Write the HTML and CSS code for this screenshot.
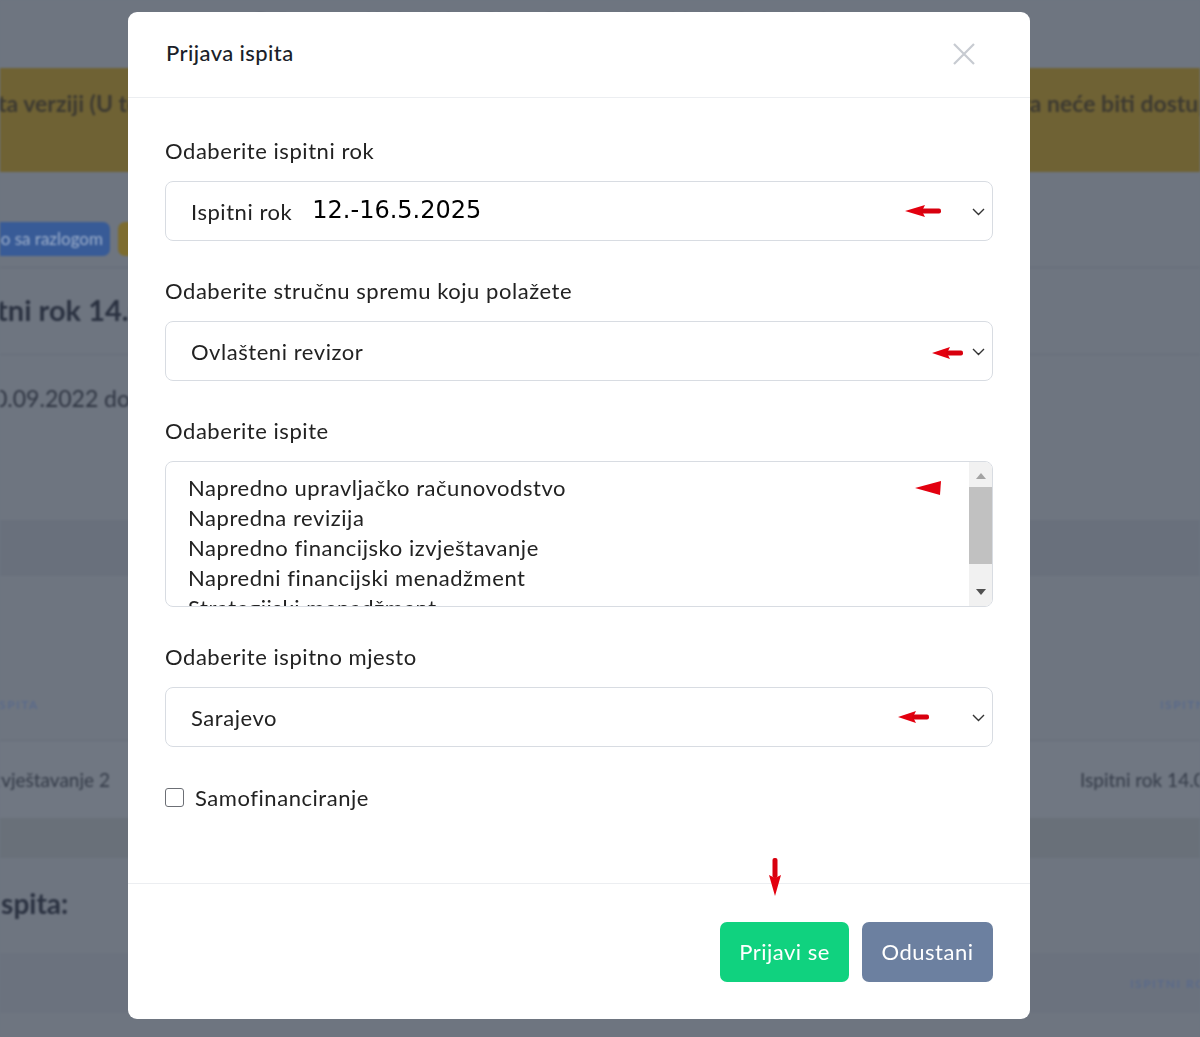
FILE: index.html
```html
<!DOCTYPE html>
<html lang="hr">
<head>
<meta charset="utf-8">
<title>Prijava ispita</title>
<link rel="stylesheet" href="styles.css">
</head>
<body>
<div class="page">
  <div class="nav">
    <span>Početna</span><span>Korisnički profil</span><span>Obavijesti</span><span>Moji ispitni rokovi</span>
  </div>
  <div class="banner">
    <span class="banner-left">ta verziji (U toku je testiranje aplikacije)</span>
    <span class="banner-right">va neće biti dostupna</span>
  </div>
  <div class="actions">
    <span class="btn-bg blue">Odbijeno sa razlogom</span>
    <span class="btn-bg yellow">Na čekanju</span>
  </div>
  <div class="sec-title"><span class="cut4">tni rok 14.09.2022</span></div>
  <div class="sec-date"><span class="cut6">0.09.2022 do 30.09.2022</span></div>
  <div class="band"></div>
  <div class="gap"></div>
  <div class="thead"><span class="cell-a"><span class="cut6">ISPITA</span></span><span class="cell-b">ISPITNI ROK</span></div>
  <div class="trow"><span class="cell-c"><span class="cut14">izvještavanje 2</span></span><span class="cell-d">Ispitni rok 14.09.2022</span></div>
  <div class="band2"></div>
  <div class="sec-sub"><span class="cut6">ispita:</span></div>
  <div class="thead2"><span class="cell-e">ISPITNI ROK</span></div>
</div>

<div class="overlay">
  <div class="modal">
    <div class="modal-header">
      <h2 class="modal-title">Prijava ispita</h2>
      <span class="close">
        <svg width="22" height="22" viewBox="0 0 22 22"><path d="M1 1L21 21M21 1L1 21" stroke="#c7cbd1" stroke-width="2.2" fill="none"/></svg>
      </span>
    </div>
    <div class="modal-body">
      <div class="field">
        <div class="label">Odaberite ispitni rok</div>
        <div class="select">
          <span class="value">Ispitni rok</span><span class="date">12.-16.5.2025</span>
          <svg class="chev" width="13" height="8" viewBox="0 0 13 8"><path d="M1 1L6.5 6.5L12 1" stroke="#333" stroke-width="1.4" fill="none"/></svg>
          <svg class="arrow a1" width="36" height="14" viewBox="0 0 36 14"><polygon points="0,7 20,1 17,7 20,13" fill="#e3000f"/><rect x="15" y="4.5" width="21" height="5" rx="2" fill="#d8000e"/></svg>
        </div>
      </div>
      <div class="field">
        <div class="label">Odaberite stručnu spremu koju polažete</div>
        <div class="select">
          <span class="value">Ovlašteni revizor</span>
          <svg class="chev" width="13" height="8" viewBox="0 0 13 8"><path d="M1 1L6.5 6.5L12 1" stroke="#333" stroke-width="1.4" fill="none"/></svg>
          <svg class="arrow a2" width="31" height="14" viewBox="0 0 31 14"><polygon points="0,7 18,1 15,7 18,13" fill="#e3000f"/><rect x="14" y="4.5" width="17" height="5" rx="2" fill="#d8000e"/></svg>
        </div>
      </div>
      <div class="field">
        <div class="label">Odaberite ispite</div>
        <div class="listbox">
          <div class="options">
            <div class="opt">Napredno upravljačko računovodstvo</div>
            <div class="opt">Napredna revizija</div>
            <div class="opt">Napredno financijsko izvještavanje</div>
            <div class="opt">Napredni financijski menadžment</div>
            <div class="opt">Strategijski menadžment</div>
          </div>
          <div class="scrollbar">
            <svg class="sb-up" width="10" height="6" viewBox="0 0 10 6"><polygon points="5,0 10,6 0,6" fill="#a3a3a3"/></svg>
            <div class="sb-thumb"></div>
            <svg class="sb-down" width="10" height="6" viewBox="0 0 10 6"><polygon points="0,0 10,0 5,6" fill="#505050"/></svg>
          </div>
          <svg class="arrow a3" width="26" height="14" viewBox="0 0 26 14"><polygon points="0,7 26,0 25,14" fill="#e3000f"/></svg>
        </div>
      </div>
      <div class="field">
        <div class="label">Odaberite ispitno mjesto</div>
        <div class="select">
          <span class="value">Sarajevo</span>
          <svg class="chev" width="13" height="8" viewBox="0 0 13 8"><path d="M1 1L6.5 6.5L12 1" stroke="#333" stroke-width="1.4" fill="none"/></svg>
          <svg class="arrow a4" width="31" height="14" viewBox="0 0 31 14"><polygon points="0,7 18,1 15,7 18,13" fill="#e3000f"/><rect x="14" y="4.5" width="17" height="5" rx="2" fill="#d8000e"/></svg>
        </div>
      </div>
      <label class="check">
        <span class="box"></span><span class="check-text">Samofinanciranje</span>
      </label>
    </div>
    <div class="modal-footer">
      <button class="btn btn-green">Prijavi se</button>
      <button class="btn btn-slate">Odustani</button>
    </div>
    <svg class="arrow a5" width="14" height="38" viewBox="0 0 14 38"><rect x="4.5" y="0" width="5" height="20" rx="2" fill="#d8000e"/><polygon points="7,38 1,17 7,20 13,17" fill="#e3000f"/></svg>
  </div>
</div>
</body>
</html>
```

FILE: styles.css
```css
* { box-sizing: border-box; }
html, body { margin: 0; padding: 0; }
body {
  width: 1200px;
  height: 1037px;
  overflow: hidden;
  background: #6e7580;
  font-family: "Lato", "Noto Sans", sans-serif;
}

/* ---------- blurred background page ---------- */
.page {
  width: 1200px;
  height: 1037px;
  overflow: hidden;
  background: #6e7580;
  color: #2c3340;
  filter: blur(1px);
}
.nav {
  height: 68px;
  display: flex;
  gap: 40px;
  padding-left: 255px;
  padding-top: 7px;
  font-size: 20px;
  line-height: 24px;
  color: #343b48;
  white-space: nowrap;
}
.banner {
  height: 104px;
  background: #6f6234;
  display: flex;
  padding-top: 21px;
  font-size: 23px;
  font-weight: 700;
  line-height: 28px;
  color: #3d3a31;
  white-space: nowrap;
  overflow: hidden;
}
.banner-left { flex: 0 0 1020px; margin-left: -2px; overflow: hidden; }
.banner-right { flex: 0 0 auto; }
.actions {
  height: 96px;
  display: flex;
  gap: 8px;
  padding-top: 50px;
  border-bottom: 1px solid #646b77;
}
.btn-bg {
  height: 34px;
  border-radius: 7px;
  font-size: 17px;
  line-height: 34px;
  white-space: nowrap;
  flex-shrink: 0;
}
.btn-bg.blue {
  width: 180px;
  margin-left: -70px;
  background: #385b97;
  color: #9fb0cb;
  text-align: right;
  padding-right: 7px;
}
.btn-bg.yellow {
  width: 140px;
  background: #7d6c2f;
  color: #3d3a31;
  padding-left: 12px;
}
.sec-title {
  height: 87px;
  font-size: 29px;
  font-weight: 700;
  line-height: 34px;
  padding-top: 25px;
  white-space: nowrap;
  border-bottom: 1px solid #666d79;
  color: #2a3140;
}
.sec-date {
  height: 165px;
  font-size: 23px;
  line-height: 28px;
  padding-top: 29px;
  white-space: nowrap;
  color: #2f3542;
}
.cut4 { margin-left: -3px; }
.cut6 { margin-left: -6px; }
.cut14 { margin-left: -12px; }
.band { height: 56px; background: #69707c; }
.gap { height: 92px; }
.thead {
  height: 73px;
  display: flex;
  align-items: center;
  font-size: 12px;
  font-weight: 700;
  letter-spacing: 1.5px;
  color: #5a6a8a;
  white-space: nowrap;
  border-bottom: 1px solid #666d79;
}
.cell-a { flex: 0 0 1160px; }
.cell-b { flex: 0 0 auto; }
.trow {
  height: 77px;
  display: flex;
  align-items: center;
  font-size: 19px;
  color: #343b48;
  white-space: nowrap;
  background: #707782;
}
.cell-c { flex: 0 0 1080px; }
.cell-d { flex: 0 0 auto; }
.band2 { height: 40px; background: #697079; }
.sec-sub {
  height: 95px;
  font-size: 28px;
  font-weight: 700;
  line-height: 34px;
  padding-top: 28px;
  color: #2a3140;
}
.thead2 {
  height: 60px;
  display: flex;
  align-items: center;
  font-size: 12px;
  font-weight: 700;
  letter-spacing: 1.5px;
  color: #5a6a8a;
  padding-left: 1130px;
  white-space: nowrap;
  background: #6b727e;
}

/* ---------- modal ---------- */
.overlay {
  position: fixed;
  inset: 0;
  padding: 12px 0 0 128px;
}
.modal {
  position: relative;
  width: 902px;
  height: 1007px;
  background: #ffffff;
  border-radius: 9px;
  display: flex;
  flex-direction: column;
  color: #222;
  letter-spacing: 0.55px;
}
.modal-header {
  height: 86px;
  display: flex;
  align-items: center;
  justify-content: space-between;
  padding: 0 55px 0 38px;
  border-bottom: 1px solid #eceef1;
}
.modal-title {
  margin: 0;
  font-size: 22px;
  font-weight: 500;
  color: #1b1f29;
  padding-bottom: 4px;
  letter-spacing: 0.4px;
}
.close { display: flex; padding-bottom: 2px; }

.modal-body {
  flex: 1;
  padding: 39px 37px 0 37px;
  display: flex;
  flex-direction: column;
  gap: 36px;
}
.field { display: flex; flex-direction: column; gap: 16px; }
.label {
  font-size: 22px;
  line-height: 28px;
  color: #222;
}
.select {
  position: relative;
  height: 60px;
  border: 1px solid #d8dce2;
  border-radius: 8px;
  display: flex;
  align-items: center;
  padding: 0 7px 0 25px;
  font-size: 22px;
}
.value { color: #222; }
.date {
  margin-left: 20px;
  font-family: "DejaVu Sans", sans-serif;
  font-size: 24px;
  letter-spacing: 0;
  color: #000;
  padding-bottom: 2px;
}
.chev { margin-left: auto; margin-top: 1px; }
.arrow { position: absolute; }
.a1 { left: 739px; top: 22px; }
.a2 { left: 766px; top: 24px; }
.a4 { left: 732px; top: 22px; }

.listbox {
  position: relative;
  height: 146px;
  border: 1px solid #d8dce2;
  border-radius: 8px;
  display: flex;
  overflow: hidden;
}
.options {
  flex: 1;
  padding: 11px 0 0 22px;
  overflow: hidden;
  font-size: 22px;
  line-height: 30px;
  color: #222;
}
.opt { white-space: nowrap; }
.scrollbar {
  width: 23px;
  background: #f1f1f1;
  display: flex;
  flex-direction: column;
  align-items: center;
}
.sb-up { margin-top: 11px; }
.sb-thumb {
  width: 23px;
  height: 77px;
  margin-top: 8px;
  background: #c1c1c1;
}
.sb-down { margin-top: auto; margin-bottom: 11px; }
.a3 { left: 749px; top: 19px; }

.check {
  display: flex;
  align-items: center;
  gap: 11px;
  height: 28px;
}
.box {
  width: 19px;
  height: 19px;
  border: 1.6px solid #6c6f75;
  border-radius: 3px;
  background: #fff;
}
.check-text { font-size: 22px; color: #222; }

.modal-footer {
  height: 136px;
  border-top: 1px solid #eceef1;
  display: flex;
  justify-content: flex-end;
  align-items: center;
  gap: 13px;
  padding: 0 37px 0 0;
}
.btn {
  height: 60px;
  border: none;
  border-radius: 7px;
  font-family: "Lato", "Noto Sans", sans-serif;
  font-size: 22px;
  letter-spacing: 0.5px;
  color: #ffffff;
}
.btn-green { width: 129px; background: #10d27f; }
.btn-slate { width: 131px; background: #6c80a0; }
.a5 { left: 640px; top: 846px; }
```
